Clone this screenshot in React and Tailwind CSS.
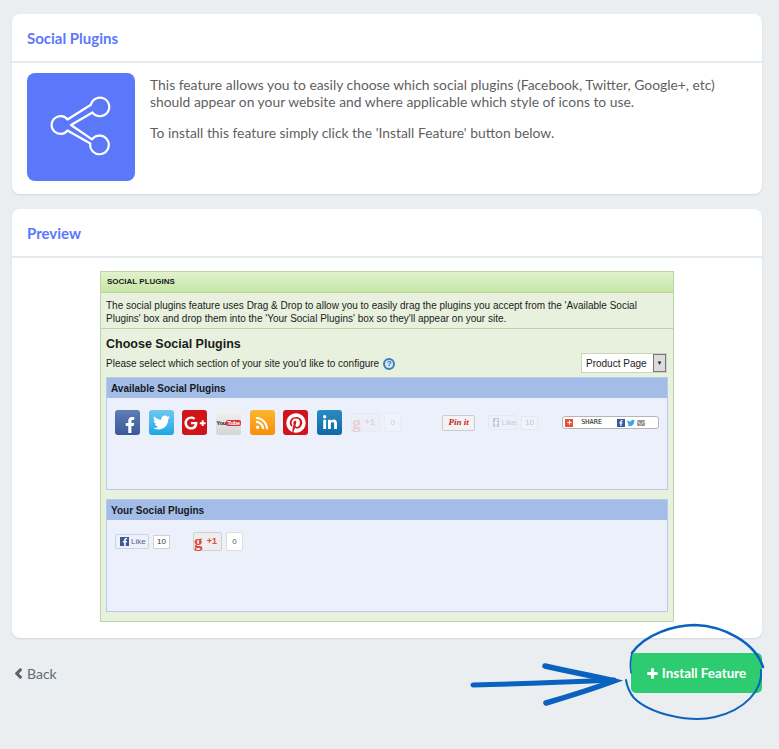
import { FaChevronLeft, FaFacebookF, FaGooglePlusG, FaLinkedinIn, FaPinterest, FaPlus, FaRss, FaTwitter, FaEnvelope } from "react-icons/fa";

const tile = "flex h-[25px] w-[25px] shrink-0 items-center justify-center rounded-[3px] text-white";

function Card({ title, children }) {
  return (
    <section className="rounded-lg bg-white shadow-[0_1px_2px_rgba(0,0,0,0.1)]">
      <h2 className="flex h-[49px] items-center border-b-2 border-[#e8ebee] px-[15px] pt-[1px] text-[15px] font-bold text-[#5b78fb]">
        {title}
      </h2>
      {children}
    </section>
  );
}

function ShareIcon() {
  return (
    <svg viewBox="1 2 70 70" className="h-[70px] w-[70px]" fill="none" stroke="white" strokeWidth="2.2" strokeLinejoin="round">
      <path d="M26 35 47.5 22.5A9.3 9.3 0 1 0 45.9 14.8L22.5 29.5A8.9 8.9 0 1 0 22.5 40.5L45.3 53.5A9.3 9.3 0 1 0 47 49.4Z" />
    </svg>
  );
}

function FbLike({ faded }) {
  return (
    <div className={`flex items-center gap-[4px] ${faded ? "opacity-25" : ""}`}>
      <div className={`flex h-[15px] items-center gap-[2px] rounded-[2px] border border-[#cad4e7] bg-[#eef1f7] pl-[4px] text-[8px] text-[#50618b] ${faded ? "w-[29px]" : "w-[34px]"}`}>
        <span className="flex h-[9px] w-[9px] items-end justify-center bg-[#3b5998] text-white">
          <FaFacebookF className="h-[8px] w-[6px]" />
        </span>
        Like
      </div>
      <div className="flex h-[14px] w-[17px] items-center justify-center border border-[#d1d1d1] bg-white text-[8px] text-[#333]">10</div>
    </div>
  );
}

function PlusOne({ faded }) {
  return (
    <div className={`flex items-center gap-[4px] ${faded ? "opacity-20" : ""}`}>
      <div className="flex h-[19px] w-[29px] items-center justify-between rounded-[2px] border border-[#d0d0d0] bg-[#eeeeee] pr-[4px] font-bold text-[#dd4b39]">
        <span className="font-['Liberation_Serif',serif] text-[17px] leading-none">g</span>
        <span className="text-[9px]">+1</span>
      </div>
      <div className="flex h-[19px] w-[17px] items-center justify-center rounded-[2px] border border-[#dddddd] bg-white text-[8px] text-[#555]">0</div>
    </div>
  );
}

function PluginBox({ title, children }) {
  return (
    <div className="h-[113px] border border-[#b5cbe8] bg-[#ebf0fa]">
      <div className="flex h-[20px] items-center bg-[#a3bde8] px-[4px] text-[10px] font-bold text-[#15191f]">{title}</div>
      {children}
    </div>
  );
}

function Preview() {
  return (
    <div className="mx-auto h-[351px] w-[574px] border border-[#bcd5a4] bg-[#e8f1dd] font-['Liberation_Sans',sans-serif] text-[#1b1b1b]">
      <div className="flex h-[21px] items-center border-b border-[#bcd5a4] bg-gradient-to-b from-[#e2f2cd] to-[#c6e6a6] px-[6px] text-[8px] font-bold">
        SOCIAL PLUGINS
      </div>
      <p className="h-[36px] border-b border-[#bcd5a4] px-[5px] pt-[7px] text-[10px] leading-[12.5px]">
        The social plugins feature uses Drag &amp; Drop to allow you to easily drag the plugins you accept from the 'Available Social Plugins' box and drop them into the 'Your Social Plugins' box so they'll appear on your site.
      </p>
      <div className="px-[5px]">
        <div className="flex h-[48px] items-start justify-between pr-[1px]">
          <div className="pt-[8px]">
            <h3 className="mb-[7px] text-[12.5px] leading-[14px] font-bold">Choose Social Plugins</h3>
            <div className="flex items-center gap-[4px] text-[10px] leading-[12px]">
              Please select which section of your site you'd like to configure
              <span className="flex h-[12px] w-[12px] items-center justify-center rounded-full border-2 border-[#3b7fbd] bg-[#d6e6f4] text-[8px] font-bold text-[#2a6aa5]">?</span>
            </div>
          </div>
          <div className="mt-[24px] flex h-[20px] w-[86px] items-center justify-between border border-[#c9d6bb] bg-white pl-[4px] text-[10px]">
            Product Page
            <span className="flex h-[18px] w-[13px] items-center justify-center border border-[#777] bg-[#dcdcdc] text-[6px]">▼</span>
          </div>
        </div>
        <PluginBox title="Available Social Plugins">
          <div className="flex items-center pt-[12px] pl-[8px]">
            <div className="flex gap-[8.7px]">
              <span className={`${tile} bg-gradient-to-b from-[#5d7db4] to-[#3b5998]`}><FaFacebookF className="h-[16px] w-[16px] translate-x-[2px] translate-y-[2px]" /></span>
              <span className={`${tile} bg-gradient-to-b from-[#6cc8ef] to-[#12a7e6]`}><FaTwitter className="h-[17px] w-[17px]" /></span>
              <span className={`${tile} bg-[#cf1519]`}><FaGooglePlusG className="h-[22px] w-[22px]" /></span>
              <span className={`${tile} whitespace-nowrap bg-gradient-to-b from-[#f2f2f2] to-[#d5d5d5] text-[6px] leading-none font-bold tracking-tighter`}>
                <span className="text-[#222]">You</span><span className="rounded-[2px] bg-[#d9343b] px-[1px] text-white">Tube</span>
              </span>
              <span className={`${tile} bg-gradient-to-b from-[#fdb52d] to-[#f68f07]`}><FaRss className="h-[14px] w-[14px]" /></span>
              <span className={`${tile} bg-[#cf141c]`}><FaPinterest className="h-[20px] w-[20px]" /></span>
              <span className={`${tile} bg-gradient-to-b from-[#2a8bc4] to-[#0f6aa5]`}><FaLinkedinIn className="h-[16px] w-[16px]" /></span>
            </div>
            <div className="ml-[9px]"><PlusOne faded /></div>
            <div className="ml-[41px] flex h-[16px] w-[33px] items-center justify-center rounded-[2px] border border-[#cccccc] bg-[#f3f3f3] font-['Liberation_Serif',serif] text-[9px] font-bold text-[#cb2027] italic">
              Pin it
            </div>
            <div className="ml-[13px]"><FbLike faded /></div>
            <div className="ml-[24px] flex h-[13px] w-[97px] items-center rounded-[3px] border border-[#b5b5b5] bg-white pl-[2px] font-['DejaVu_Sans_Mono',monospace] text-[7px] text-[#222]">
              <span className="flex h-[8px] w-[8px] items-center justify-center bg-[#e8503a] text-white"><FaPlus className="h-[5px] w-[5px]" /></span>
              <span className="ml-[8px]">SHARE</span>
              <span className="ml-[15px] flex h-[8px] w-[8px] items-center justify-center bg-[#3b5998] text-white"><FaFacebookF className="h-[6px] w-[6px]" /></span>
              <FaTwitter className="ml-[2px] h-[8px] w-[8px] text-[#3aa5e0]" />
              <FaEnvelope className="ml-[2px] h-[8px] w-[8px] text-[#999]" />
            </div>
          </div>
        </PluginBox>
        <div className="h-[9px]" />
        <PluginBox title="Your Social Plugins">
          <div className="flex items-center pt-[12px] pl-[8px]">
            <FbLike />
            <div className="ml-[23px]"><PlusOne /></div>
          </div>
        </PluginBox>
      </div>
    </div>
  );
}

export default function App() {
  return (
    <div className="relative h-[749px] overflow-hidden bg-[#ebeef0] pt-[14px] pr-[17px] pl-[12px] font-['Lato',sans-serif]">
      <Card title="Social Plugins">
        <div className="flex gap-[15px] px-[15px] pt-[10px] pb-[13px]">
          <div className="flex h-[108px] w-[108px] shrink-0 items-center justify-center rounded-lg bg-[#5b78fb]">
            <ShareIcon />
          </div>
          <div className="text-[13.87px] leading-[17px] text-[#5f5f63]">
            <p className="pt-[3px]">
              This feature allows you to easily choose which social plugins (Facebook, Twitter, Google+, etc) should appear on your website and where applicable which style of icons to use.
            </p>
            <p className="mt-[14px]">To install this feature simply click the 'Install Feature' button below.</p>
          </div>
        </div>
      </Card>

      <div className="mt-[15px]">
        <Card title="Preview">
          <div className="pt-[13px] pb-[16px]">
            <Preview />
          </div>
        </Card>
      </div>

      <div className="mt-[15px] flex items-center justify-between">
        <button type="button" className="flex items-center gap-[4px] pl-[2px] text-[14px] text-[#5f6b76]">
          <FaChevronLeft className="h-[11px] w-[9px] stroke-[60] text-[#5a6470]" />
          Back
        </button>
        <button type="button" className="flex h-[40px] w-[131px] items-center justify-center gap-[4px] rounded-[5px] bg-[#2ecc71] text-[13.4px] font-bold text-white">
          <FaPlus className="h-[11px] w-[11px] stroke-[50]" />
          Install Feature
        </button>
      </div>

      {/* hand drawn arrow and circle on top of the button */}
      <svg className="pointer-events-none absolute top-0 left-0" width="779" height="749" fill="none" stroke="#0a62c0" strokeLinecap="round">
        <path d="M473 685 C 520 684 570 682 614 680" strokeWidth="5" />
        <path d="M545 666 C 570 672 595 676 614 681 C 595 688 570 696 546 703" strokeWidth="5.5" />
        <path d="M632 653 C 645 634 675 625 695 625 C 725 626 755 643 763 667" strokeWidth="2.5" />
        <path d="M761 670 C 763 690 745 710 715 717 C 690 723 650 714 634 698 C 629 692 627 686 626 680" strokeWidth="2" />
        <path d="M632 653 C 630 660 630 667 631 673" strokeWidth="1.5" />
      </svg>
    </div>
  );
}
